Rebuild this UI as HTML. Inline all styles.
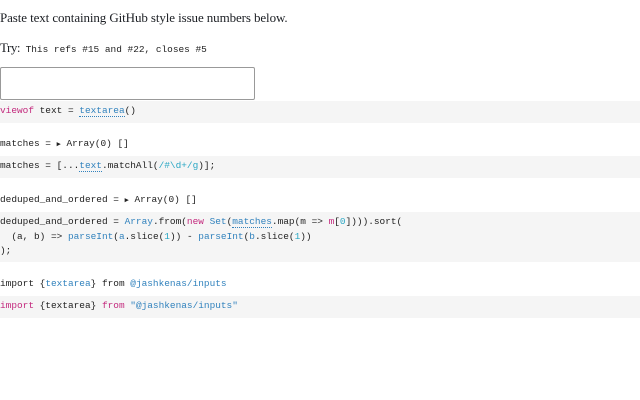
<!DOCTYPE html>
<html><head><style>
body{margin:0;background:#fff;width:640px;height:400px;overflow:hidden;position:relative;font-family:"Liberation Mono",monospace;font-size:9.45px;color:#222}
.a{position:absolute;left:0;white-space:pre}
.s{font-family:"Liberation Serif",serif;font-size:13px;color:#1b1e23}
.bg{position:absolute;left:0;width:640px;background:#f5f5f5}
.k{color:#c3297d}.b{color:#3182bd}.u{border-bottom:1px dotted #3182bd}.n{color:#2aa7c4}
.tri{font-size:7px}
</style></head><body>
<div class="a s" style="top:10px;letter-spacing:-0.1px">Paste text containing GitHub style issue numbers below.</div>
<div class="a" style="top:40px"><span class="s" style="letter-spacing:-0.5px">Try:</span> This refs #15 and #22, closes #5</div>
<div style="position:absolute;left:0;top:67px;width:253px;height:31px;border:1px solid #999;border-radius:2px"></div>
<div class="bg" style="top:101px;height:22px"></div>
<div class="a" style="top:105px"><span class="k">viewof</span> text = <span class="b u">textarea</span>()</div>
<div class="a" style="top:138px">matches = <span class="tri">▶</span> Array(0) []</div>
<div class="bg" style="top:156px;height:22px"></div>
<div class="a" style="top:160px">matches = [...<span class="b u">text</span>.matchAll(<span class="n">/#\d+/g</span>)];</div>
<div class="a" style="top:194px">deduped_and_ordered = <span class="tri">▶</span> Array(0) []</div>
<div class="bg" style="top:212px;height:50px"></div>
<div class="a" style="top:215px;line-height:14.5px">deduped_and_ordered = <span class="b">Array</span>.from(<span class="k">new</span> <span class="b">Set</span>(<span class="b u">matches</span>.map(m => <span class="k">m</span>[<span class="n">0</span>]))).sort(
  (a, b) => <span class="b">parseInt</span>(<span class="b">a</span>.slice(<span class="n">1</span>)) - <span class="b">parseInt</span>(<span class="b">b</span>.slice(<span class="n">1</span>))
);</div>
<div class="a" style="top:278px">import {<span class="b">textarea</span>} from <span class="b">@jashkenas/inputs</span></div>
<div class="bg" style="top:296px;height:22px"></div>
<div class="a" style="top:300px"><span class="k">import</span> {textarea} <span class="k">from</span> <span class="b">"@jashkenas/inputs"</span></div>
</body></html>
